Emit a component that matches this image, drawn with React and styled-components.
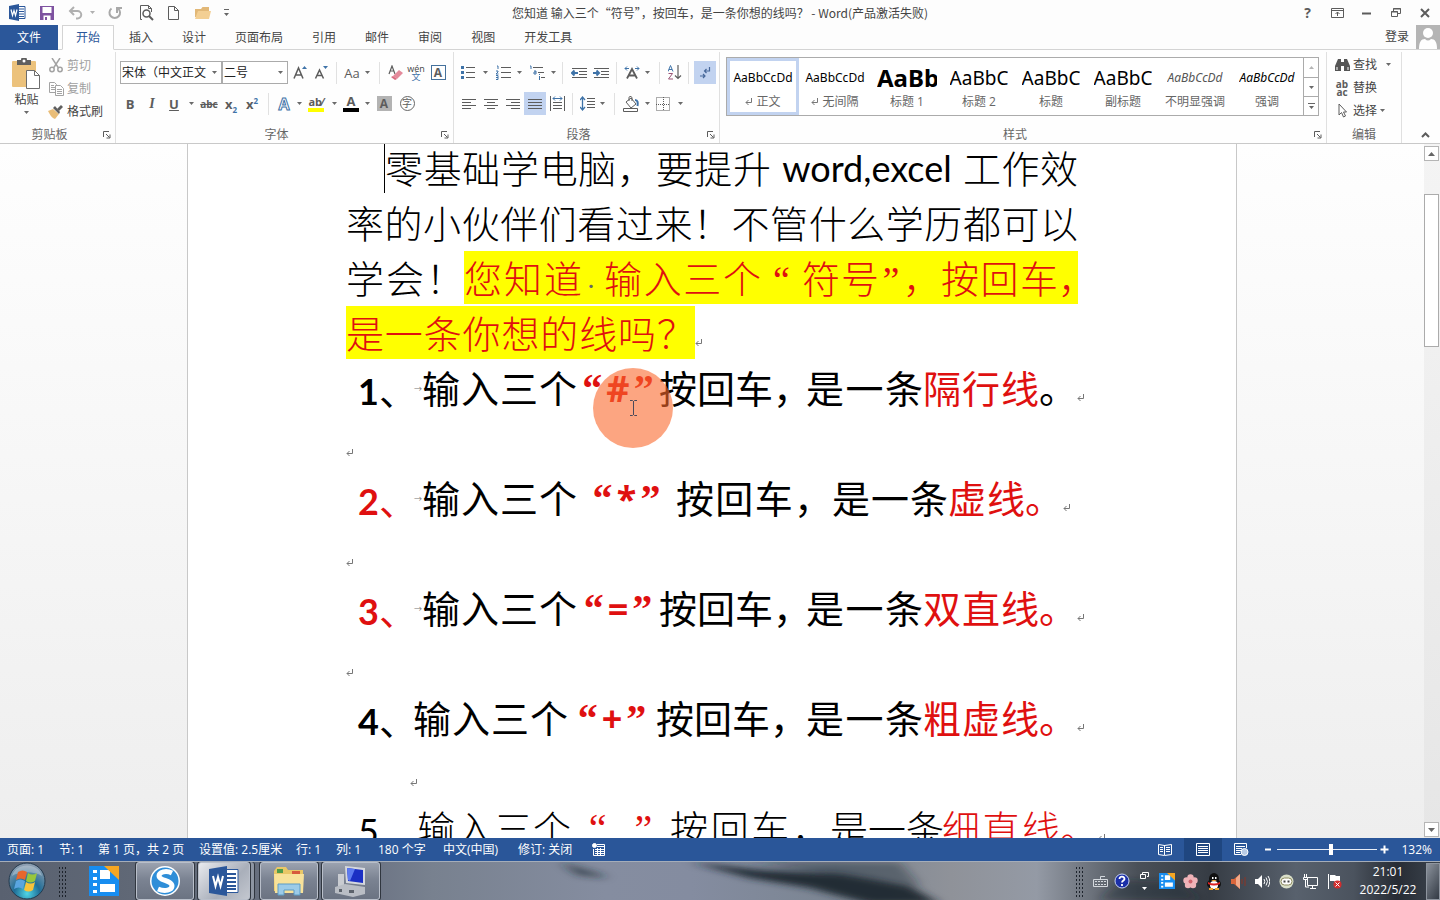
import { useState } from 'react'
import styled, { createGlobalStyle, css } from 'styled-components'

const INK = '#5c5c5c'
const BLUE = '#3f73a8'
const PALE = '#c2d3f0'

/* ---------- icons ---------- */

const Svg = ({ w = 16, h = 16, children, ...rest }) => (
  <svg
    width={w}
    height={h}
    viewBox={`0 0 ${w} ${h}`}
    fill="none"
    stroke={INK}
    aria-hidden="true"
    {...rest}
  >
    {children}
  </svg>
)

const Caret = ({ color = '#6a6a6a' }) => (
  <Svg w={5} h={3} stroke="none">
    <path d="M0 0h5L2.500 3z" fill={color} />
  </Svg>
)

const WordLogo = () => (
  <Svg w={17} h={17} stroke="none">
    <path d="M9 2.500h7v12H9z" fill="#fff" stroke="#2b579a" />
    <path d="M10 5h5M10 7.500h5M10 10h5M10 12.500h5" stroke="#2b579a" />
    <path d="M0 2l10-2v17L0 15z" fill="#2b579a" />
    <path d="M2 5.500l1.500 6L5 6.500l1.500 5L8 5.500" stroke="#fff" strokeWidth="1.200" />
  </Svg>
)

const SaveIcon = () => (
  <Svg w={14} h={14} stroke="none">
    <path d="M0 0h14v14H0z" fill="#7e52a0" />
    <path d="M2.500 1h9v6h-9zM3.500 9.500h7V14h-7z" fill="#fff" />
    <path d="M5 11h2v3H5z" fill="#7e52a0" />
  </Svg>
)

const UndoIcon = () => (
  <Svg w={15} h={14} stroke="#b0b0b0" strokeWidth="2">
    <path d="M2 5h7.500a3.500 3.500 0 010 7.500H8M6 1L2 5l4 4" />
  </Svg>
)

const RedoIcon = () => (
  <Svg w={14} h={14} stroke="#a9a9a9" strokeWidth="2">
    <path d="M3.500 2.500A5.300 5.300 0 1010 2.500M9 7V2H14" />
  </Svg>
)

const PreviewIcon = () => (
  <Svg w={15} h={17}>
    <path d="M3 15.500H1.500v-14h8l3 3V8M9.500 1.500v3h3" />
    <circle cx="7.500" cy="9.500" r="3.500" strokeWidth="1.500" />
    <path d="M10 12l4 4" strokeWidth="2" />
  </Svg>
)

const NewIcon = () => (
  <Svg w={11} h={14}>
    <path d="M.5.5h6l4 4v9H.5zM6.500.5v4h4" />
  </Svg>
)

const FolderIcon = () => (
  <Svg w={16} h={13} stroke="none">
    <path d="M0 3h6l1.500-2H14v10H0z" fill="#e2b877" />
    <path d="M3 5h13l-2 8H0z" fill="#f3cf93" />
  </Svg>
)

const PasteIcon = () => (
  <Svg w={29} h={31} stroke="none">
    <rect x="0" y="3" width="24" height="26" rx="1" fill="#ecc27c" />
    <path d="M5 2h4a3 3 0 016 0h4v5H5z" fill="#5f5f5f" />
    <circle cx="12" cy="3" r="1.500" fill="#fff" />
    <path d="M14.500 12.500h8l5 5v13h-13z" fill="#fff" stroke="#6d6d6d" />
    <path d="M22.500 12.500v5h5" stroke="#6d6d6d" />
  </Svg>
)

const CutIcon = () => (
  <Svg w={14} h={15} stroke="#a3a3a3" strokeWidth="1.500">
    <path d="M3 0l6.500 10M11 0L4.500 10" />
    <circle cx="3" cy="11.500" r="2.200" />
    <circle cx="11" cy="11.500" r="2.200" />
  </Svg>
)

const CopyIcon = () => (
  <Svg w={15} h={14} stroke="#a3a3a3">
    <path d="M.5.5h5l2 2v8h-7zM2 3.500h3M2 5.500h4M2 7.500h4" />
    <path d="M6.500 3.500h5l3 3v7h-8z" fill="#fff" />
    <path d="M8 7.500h5M8 9.500h5M8 11.500h5" />
  </Svg>
)

const BrushIcon = () => (
  <Svg w={16} h={14} stroke="none">
    <path d="M0 6l5-2 6 5-4 5C4 13 2 10 0 6z" fill="#e9bd78" />
    <path d="M5 3l2-2 5 6-1 2z" fill="#5f5f5f" />
    <path d="M9 4l4-4 2 2-4 4z" fill="#5f5f5f" />
  </Svg>
)

const Launcher = () => (
  <Svg w={8} h={8}>
    <path d="M.5 6V.5H6M3 3l3.500 3.500M7 3.500V7H3.500" />
  </Svg>
)

const GrowFont = ({ down }) => (
  <Svg w={14} h={15} stroke="none">
    <path
      d={down ? 'M1.500 13.500L5.500 5l4 8.500M3 10.500h5' : 'M1 13.500L5.500 3l4.500 10.500M2.500 10h6'}
      stroke={INK}
      strokeWidth="1.500"
    />
    <path d={down ? 'M9 1h5l-2.500 3z' : 'M9 4h5l-2.500-3z'} fill={BLUE} />
  </Svg>
)

const EraserIcon = () => (
  <Svg w={15} h={15} stroke="none">
    <path d="M1 9L4 1l3 8M2 6h4" stroke={INK} strokeWidth="1.200" />
    <path d="M5 11l6-6 4 3-6 6z" fill="#e48a9b" />
    <path d="M3 12l2-1 4 3-2 1z" fill="#d9697f" />
  </Svg>
)

const ListIcon = ({ kind }) => (
  <Svg w={15} h={15}>
    {kind === 'bullet' && (
      <>
        <path d="M5 2.500h9M5 7.500h9M5 12.500h9" />
        <path d="M0 2.500h3M0 7.500h3M0 12.500h3" stroke={BLUE} strokeWidth="3" />
      </>
    )}
    {kind === 'number' && (
      <>
        <path d="M5 2.500h10M5 7.500h10M5 12.500h10" />
        <path d="M1 1h1v3M0 6h2v1L0 9h2.500M0 10.500h2v4H0M0 12.500h2" stroke={BLUE} />
      </>
    )}
    {kind === 'multi' && (
      <>
        <path d="M3 2.500h10M8 7.500h6M11 12.500h4" />
        <path d="M0 1h1v3M4 6h2v3H4v-2h2M9.500 11v4M9.500 9v1" stroke={BLUE} />
      </>
    )}
  </Svg>
)

const IndentIcon = ({ out }) => (
  <Svg w={16} h={12}>
    <path d="M1 1.500h15M8 4.500h8M8 7.500h8M1 10.500h15" />
    <path d={out ? 'M7 6H1M3.500 3.500L1 6l2.500 2.500' : 'M0 6h6M3.500 3.500L6 6 3.500 8.500'} stroke={BLUE} strokeWidth="2" />
  </Svg>
)

const AlignIcon = ({ kind }) => {
  const short = { left: 'M0 4.500h9M0 10.500h9', center: 'M3 4.500h8M3 10.500h8', right: 'M5 4.500h9M5 10.500h9', full: 'M0 4.500h14M0 10.500h14' }
  return (
    <Svg w={14} h={12}>
      <path d={`M0 1.500h14M0 7.500h14${short[kind]}`} />
    </Svg>
  )
}

const DistributeIcon = () => (
  <Svg w={15} h={15}>
    <path d="M.5 0v15M14.500 0v15M3 6.500h9M3 9.500h9M3 12.500h9" />
    <path d="M3 2.500h9M5 .5l-2 2 2 2M10 .5l2 2-2 2" stroke={BLUE} />
  </Svg>
)

const ScaleIcon = () => (
  <Svg w={16} h={13}>
    <path d="M3 12.500L8 3l5 9.500M5 9.500h6" strokeWidth="1.800" />
    <path d="M1 2.500h4M3 .5l-2 2 2 2M11 2.500h4M13 .5l2 2-2 2" stroke={BLUE} />
  </Svg>
)

const SortIcon = () => (
  <Svg w={14} h={15}>
    <path d="M0 6.500L2.500.5 5 6.500M1 4.500h3" stroke={BLUE} />
    <path d="M.5 8.500h4L.5 14h4.500" stroke="#9a5577" />
    <path d="M10 0v13M7 10.500l3 3 3-3" strokeWidth="1.200" />
  </Svg>
)

const MarksIcon = () => (
  <Svg w={11} h={12} stroke="#47689a">
    <path d="M9.500 0v4h-5M6.500 2l-2 2 2 2M0 9h5M3 7l2 2-2 2" strokeWidth="1.200" />
  </Svg>
)

const SpacingIcon = () => (
  <Svg w={15} h={15}>
    <path d="M7 2.500h8M7 5.500h8M7 8.500h8M7 11.500h8" />
    <path d="M2.500 1v12M0 4l2.500-3L5 4M0 11l2.500 3L5 11" stroke={BLUE} strokeWidth="1.300" />
  </Svg>
)

const FillIcon = () => (
  <Svg w={16} h={16}>
    <path d="M3 6l5-4 5 6-5 4zM6 5V1.500C6 0 9 0 9 2v3" />
    <path d="M12 4c3 0 3 3 2.500 6" stroke={BLUE} strokeWidth="2" />
    <path d="M.5 12.500h14v3H.5z" fill="#fff" />
  </Svg>
)

const BorderIcon = () => (
  <Svg w={14} h={14} strokeDasharray="1 1">
    <path d="M.5.5h13v13H.5zM7.500 0v14M0 7.500h14" />
  </Svg>
)

const FindIcon = () => (
  <Svg w={15} h={13} stroke="none">
    <path d="M3 1h3v3h3V1h3l3 7v5H9V8H6v5H0V8z" fill="#555" />
    <path d="M2 9v3M13 9v3" stroke="#fff" />
  </Svg>
)

const PointerIcon = () => (
  <Svg w={9} h={15}>
    <path d="M1 1v11l2.500-2.500L5.500 14l2-1-2-4H8.500z" fill="#fff" />
  </Svg>
)

const ReturnMark = () => (
  <Svg w={8} h={8} stroke="#777">
    <path d="M6.500 0v4.500H1M3.500 2L1 4.500 3.500 7" />
  </Svg>
)

const UserIcon = () => (
  <Svg w={24} h={24} stroke="none">
    <path d="M0 0h24v24H0z" fill="#b5b5b5" />
    <circle cx="12" cy="8" r="5" fill="#fff" />
    <path d="M3 24c0-7 2-10 6-10 2 2 4 2 6 0 4 0 6 3 6 10z" fill="#fff" />
  </Svg>
)

/* ---------- window frame ---------- */

const GlobalStyle = createGlobalStyle`
  * { box-sizing: border-box; }
  body {
    margin: 0;
    overflow: hidden;
    font: 12px/16px 'Open Sans', 'Noto Sans CJK SC', sans-serif;
    color: #444;
  }
  button, select, input { font: inherit; color: inherit; }
  svg { flex: none; display: block; }
`

const Window = styled.div`
  display: flex;
  flex-direction: column;
  height: 100vh;
  background: #fff;
`

const PlainButton = styled.button`
  display: flex;
  align-items: center;
  justify-content: center;
  flex: none;
  padding: 0;
  border: 0;
  background: none;
  white-space: nowrap;
`

const TitleBar = styled.header`
  display: grid;
  grid-template-columns: 1fr auto 1fr;
  align-items: center;
  height: 25px;
  background: #fdfdfd;
`

const TitleText = styled.span`
  font-family: 'Noto Sans CJK SC', sans-serif;
`

const TitleSide = styled.div`
  display: flex;
  padding: 0 1px;
  justify-content: ${(p) => (p.$end ? 'flex-end' : 'flex-start')};
`

const Tool = styled(PlainButton)`
  width: ${(p) => p.$w || 22}px;
  height: ${(p) => p.$h || 23}px;
  ${(p) =>
    p.$on &&
    css`
      background: ${PALE};
    `}
`

const TabBar = styled.nav`
  display: flex;
  gap: 1px;
  height: 25px;
  background: #fdfdfd;
  border-bottom: 1px solid #d4d4d4;
`

const Tab = styled(PlainButton)`
  height: 25px;
  padding: 0 14px;
  ${(p) =>
    p.$file &&
    css`
      padding: 0 17px;
      margin-right: 3px;
      background: #2b579a;
      color: #fff;
    `}
  ${(p) =>
    p.$active &&
    css`
      padding: 0 13px;
      border: 1px solid #d4d4d4;
      border-bottom-color: #fff;
      background: #fff;
      color: #2b579a;
    `}
`

const SignIn = styled(PlainButton)`
  gap: 7px;
  margin-left: auto;
`

/* ---------- ribbon ---------- */

const Ribbon = styled.section`
  display: flex;
  flex: none;
  height: 94px;
  padding-top: 2px;
  background: #fefefe;
  border-bottom: 1px solid #c9c9c9;
`

const Group = styled.div`
  display: flex;
  flex-direction: column;
  flex: ${(p) => (p.$w ? `0 0 ${p.$w}px` : '1')};
  min-width: 0;
  border-right: 1px solid #e0e0e0;
`

const GroupBody = styled.div`
  flex: 1;
  min-height: 0;
  padding: ${(p) => p.$pad || '0'};
`

const GroupLabel = styled.div`
  display: grid;
  grid-template-columns: ${(p) => (p.$plain ? '1fr' : '1fr 16px')};
  align-items: center;
  justify-items: center;
  height: 16px;
  color: #666;
`

const ToolRow = styled.div`
  display: flex;
  align-items: center;
  height: 23px;
  margin-bottom: 8px;
`

const Sep = styled.span`
  flex: none;
  width: ${(p) => p.$w}px;
  height: 22px;
  background: linear-gradient(#e1e1e1, #e1e1e1) center / 1px 100% no-repeat;
`

const Combo = styled.label`
  position: relative;
  flex: none;
  width: ${(p) => p.$w}px;
  height: 23px;
  select {
    width: 100%;
    height: 100%;
    padding: 0 0 0 1px;
    border: 1px solid #ababab;
    border-radius: 0;
    appearance: none;
    background: #fff;
    color: #222;
  }
  svg {
    position: absolute;
    right: 5px;
    top: 10px;
  }
`

const Glyph = styled.span`
  font: ${(p) => p.$font || "bold 14px/18px 'Open Sans'"}, 'Noto Sans CJK SC', sans-serif;
  color: ${(p) => p.$color || INK};
  text-decoration: ${(p) => p.$deco || 'none'};
  sub,
  sup {
    font-size: 8px;
    line-height: 0;
    color: ${BLUE};
  }
`

const Outlined = styled(Glyph)`
  color: #fff;
  -webkit-text-stroke: 1px ${BLUE};
`

const Underbar = styled.span`
  display: flex;
  flex-direction: column;
  align-items: center;
  width: 16px;
  border-bottom: 4px solid ${(p) => p.$bar};
`

const Boxed = styled.span`
  display: grid;
  place-items: center;
  width: 15px;
  height: 15px;
  font: bold 12px/13px 'Open Sans', 'Noto Sans CJK SC', sans-serif;
  color: ${INK};
  ${(p) => p.$kind === 'border' && `border: 1px solid #44719c;`}
  ${(p) => p.$kind === 'shade' && `background: #b3b3b3;`}
  ${(p) =>
    p.$kind === 'round' &&
    `border: 1px solid #666; border-radius: 50%; font-weight: normal; font-size: 10px;`}
`

const Phonetic = styled.span`
  display: flex;
  flex-direction: column;
  align-items: center;
  font-size: 9px;
  line-height: 8px;
  b {
    font-weight: normal;
    color: ${BLUE};
  }
`

const ClipBody = styled.div`
  display: flex;
  gap: 7px;
  padding: 2px 0 0 12px;
`

const PasteButton = styled(PlainButton)`
  flex-direction: column;
  justify-content: flex-start;
  gap: 3px;
  padding-top: 4px;
  width: 29px;
`

const CommandList = styled.div`
  display: flex;
  flex-direction: column;
  align-items: flex-start;
`

const Command = styled(PlainButton)`
  gap: 3px;
  height: 23px;
  color: ${(p) => (p.$off ? '#a0a0a0' : '#444')};
`

const IconCell = styled.span`
  display: flex;
  justify-content: center;
  width: 16px;
`

const Gallery = styled.div`
  display: flex;
  height: 59px;
  border: 1px solid #ababab;
  background: #fff;
`

const StyleCell = styled(PlainButton)`
  flex: 1 1 72px;
  min-width: 0;
  flex-direction: column;
  border: 3px solid ${(p) => (p.$on ? PALE : 'transparent')};
  color: #666;
`

const Sample = styled.span`
  height: 30px;
  max-width: 60px;
  overflow: hidden;
  color: ${(p) => p.$color || '#000'};
  font: ${(p) => p.$font || '12px'}/30px 'Noto Sans', sans-serif;
`

const StyleName = styled.span`
  display: flex;
  align-items: center;
  gap: 3px;
  height: 18px;
`

const GalleryScroll = styled.div`
  display: grid;
  grid-template-rows: 1fr 1fr 1fr;
  flex: 0 0 15px;
  border-left: 1px solid #ababab;
  button + button {
    border-top: 1px solid #ababab;
  }
`

const RibbonEnd = styled.div`
  display: flex;
  align-items: flex-end;
  justify-content: flex-end;
  flex: 0 0 38px;
  padding: 0 10px 5px 0;
`

/* ---------- document ---------- */

const Workspace = styled.main`
  display: flex;
  flex: 1;
  min-height: 0;
`

const Canvas = styled.div`
  flex: 1;
  overflow: hidden;
  background: linear-gradient(#fefefe, #f7f7f7 45%, #eeeeee);
`

/* scrolled a little into its first line */
const Page = styled.article`
  position: relative;
  width: 1050px;
  min-height: 1400px;
  margin: -3px auto 0;
  padding: 0 158px;
  border: solid #c8c8c8;
  border-width: 0 1px;
  background: #fff;
`

const Line = styled.p`
  display: flex;
  height: 55px;
  margin: 0;
  padding-left: ${(p) => p.$indent || 0}px;
  font: 38px/55px 'Noto Sans CJK SC', sans-serif;
  font-weight: ${(p) => (p.$strong ? 400 : 300)};
  color: #000;
  white-space: nowrap;
`

const Run = styled.span`
  flex: none;
  width: ${(p) => p.$w}px;
  height: 53px;
  line-height: 51px;
  text-align-last: ${(p) => (p.$center ? 'center' : 'justify')};
  color: ${(p) => (p.$red ? '#df1010' : 'inherit')};
  ${(p) => p.$mark && `background: #ff0;`}
  ${(p) => p.$latin && `font-family: Lato, 'Noto Sans CJK SC', sans-serif; font-size: 36px; line-height: 55px; font-weight: 400;`}
`

const Quote = styled.q`
  quotes: none;
  font-family: 'Liberation Serif', serif;
  font-weight: ${(p) => (p.$strong ? 'bold' : 'normal')};
`

const Quoted = styled.span`
  display: flex;
  flex: none;
  justify-content: center;
  gap: 4px;
  width: ${(p) => p.$w}px;
  height: 53px;
  font-family: 'Noto Sans', sans-serif;
  font-weight: ${(p) => (p.$thin ? 'normal' : 'bold')};
  font-size: 36px;
  color: #df1010;
  q {
    font-size: 40px;
  }
`

const Symbol = styled.span`
  min-width: 20px;
  text-align: center;
`

const SpaceDot = styled.small`
  font-size: 18px;
  color: #666;
`

const Number = styled.span`
  flex: none;
  width: ${(p) => p.$w}px;
  font-size: 38px;
  color: ${(p) => (p.$red ? '#df1010' : '#000')};
  b {
    font-family: Lato, sans-serif;
    font-size: 36px;
    font-weight: ${(p) => (p.$thin ? 'normal' : 'bold')};
  }
`

const TabMark = styled.span`
  flex: none;
  width: 8px;
  font-size: 8px;
  color: #777;
`

const EndMark = styled.span`
  align-self: center;
  padding-top: 18px;
`

const Caretline = styled.span`
  flex: none;
  width: 1px;
  height: 52px;
  margin-left: 38px;
  background: #000;
`

const Spotlight = styled.div`
  position: absolute;
  left: 405px;
  top: 227px;
  display: grid;
  place-items: center;
  width: 80px;
  height: 80px;
  border-radius: 50%;
  background: rgba(250, 105, 45, 0.6);
`

const VScroll = styled.div`
  display: flex;
  flex-direction: column;
  justify-content: space-between;
  flex: 0 0 16px;
  padding: 2px 1px 1px 0;
  background: linear-gradient(#f4f4f4, #e6e6e6);
  button {
    height: 15px;
    border: 1px solid #b5b5b5;
    background: #fff;
  }
`

const Track = styled.div`
  flex: 1;
  padding-top: 33px;
  &::before {
    content: '';
    display: block;
    height: 151px;
    border: 1px solid #ababab;
    background: #fff;
  }
`

/* ---------- status bar ---------- */

const StatusBar = styled.footer`
  display: flex;
  align-items: center;
  flex: none;
  height: 23px;
  padding-left: 7px;
  background: #2a5699;
  color: #fff;
  white-space: nowrap;
`

const Status = styled.span`
  flex: 0 0 ${(p) => p.$w}px;
`

const ViewTools = styled.div`
  display: flex;
  align-items: center;
  margin-left: auto;
  padding-right: 8px;
`

const ViewButton = styled(PlainButton)`
  width: 38px;
  height: 23px;
  background: ${(p) => (p.$on ? '#1f4680' : 'none')};
`

const ZoomSlider = styled.input`
  width: 100px;
  height: 13px;
  margin: 0 3px;
  appearance: none;
  background: linear-gradient(#e8eef7, #e8eef7) center / 100% 1px no-repeat;
  &::-webkit-slider-thumb {
    appearance: none;
    width: 4px;
    height: 11px;
    background: #fff;
  }
`

const ZoomValue = styled.span`
  margin-left: 12px;
`

/* ---------- taskbar ---------- */

const Taskbar = styled.footer`
  position: relative;
  display: flex;
  align-items: center;
  flex: none;
  height: 39px;
  overflow: hidden;
  border-top: 1px solid #a5adb9;
  background: linear-gradient(
    90deg,
    #596170 0,
    #5f6775 8%,
    #6d7585 26%,
    #78818f 30%,
    #858da0 42%,
    #848ca0 48%,
    #7b8592 58%,
    #8f9299 66%,
    #949aa5 72%,
    #4a5058 79%,
    #363c44 84%,
    #58616d 90%,
    #4b535e 94%,
    #272c34 97%,
    #3c444e 100%
  );
`

const Backdrop = styled.svg`
  position: absolute;
  inset: 0;
  width: 100%;
  height: 100%;
`

const TaskItems = styled.div`
  position: relative;
  display: flex;
  align-items: center;
  height: 100%;
  padding-left: 8px;
`

const Grip = styled.span`
  width: 8px;
  height: 31px;
  margin: 0 ${(p) => p.$gap || 0}px;
  background: radial-gradient(circle, #1d232c 1px, transparent 1px) 0 0 / 3px 4px;
`

const TaskButton = styled(PlainButton)`
  width: ${(p) => p.$w || 58}px;
  height: 38px;
  margin-right: ${(p) => p.$gap || 4}px;
  border: 1px solid #b9bfca;
  border-radius: 3px;
  background: linear-gradient(#9ba2af, #7b8392 45%, #6b7382);
  box-shadow: 0 0 0 1px #30363f;
  ${(p) =>
    p.$on &&
    css`
      background: linear-gradient(135deg, #e8eaee, #a9afba 60%, #c3c7cf);
      box-shadow: 0 0 0 1px #30363f, 4px 0 0 0 #8d95a2, 5px 0 0 0 #30363f;
    `}
`

const BareTaskButton = styled(PlainButton)`
  width: 52px;
  margin-right: 6px;
`

const Tray = styled.div`
  position: relative;
  display: flex;
  align-items: center;
  height: 100%;
  margin-left: auto;
`

const Clock = styled.time`
  width: 76px;
  margin-left: 4px;
  text-align: center;
  line-height: 18px;
  color: #fff;
`

const ShowDesktop = styled(PlainButton)`
  width: 14px;
  height: 37px;
  border: 1px solid #8e959f;
  background: linear-gradient(120deg, #8b929c, #333a44);
`

/* ---------- data ---------- */

const TABS = ['插入', '设计', '页面布局', '引用', '邮件', '审阅', '视图', '开发工具']

const STYLES = [
  { name: '正文', sample: 'AaBbCcDd', mark: true },
  { name: '无间隔', sample: 'AaBbCcDd', mark: true },
  { name: '标题 1', sample: 'AaBb', font: 'bold 24px' },
  { name: '标题 2', sample: 'AaBbC', font: '19px' },
  { name: '标题', sample: 'AaBbC', font: '19px' },
  { name: '副标题', sample: 'AaBbC', font: '19px' },
  { name: '不明显强调', sample: 'AaBbCcDd', font: 'italic 12px', color: '#555' },
  { name: '强调', sample: 'AaBbCcDd', font: 'italic 12px' },
]

// w: widths of number, text, quoted symbol, 按回车, 是一条, and the name of the line
const ITEMS = [
  { n: 1, symbol: '#', name: '隔行线', tab: true, w: [56, 155, 82, 147, 117, 116] },
  { n: 2, symbol: '*', name: '虚线', tab: true, red: true, w: [56, 155, 99, 156, 116, 77] },
  { n: 3, symbol: '=', name: '双直线', tab: true, red: true, w: [56, 155, 82, 147, 117, 116] },
  { n: 4, symbol: '+', name: '粗虚线', last: true, w: [55, 155, 88, 150, 117, 116] },
  { n: 5, symbol: '\u2002', name: '细直线', thin: true, w: [59, 154, 99, 160, 112, 118] },
]

const STATUS = [
  ['页面: 1', 52],
  ['节: 1', 39],
  ['第 1 页，共 2 页', 101],
  ['设置值: 2.5厘米', 97],
  ['行: 1', 40],
  ['列: 1', 42],
  ['180 个字', 65],
  ['中文(中国)', 75],
  ['修订: 关闭', 74],
]

/* ---------- parts ---------- */

const Drop = ({ w, label = '更多' }) => (
  <Tool $w={w} aria-label={label}>
    <Caret />
  </Tool>
)

const Header = () => (
  <>
    <TitleBar>
      <TitleSide>
        <Tool $w={32} aria-label="Word"><WordLogo /></Tool>
        <Tool $w={28} aria-label="保存"><SaveIcon /></Tool>
        <Tool $w={28} aria-label="撤消"><UndoIcon /></Tool>
        <Tool $w={6} aria-label="撤消列表"><Caret color="#b0b0b0" /></Tool>
        <Tool $w={40} aria-label="重复"><RedoIcon /></Tool>
        <Tool $w={22} aria-label="打印预览"><PreviewIcon /></Tool>
        <Tool $w={32} aria-label="新建"><NewIcon /></Tool>
        <Tool $w={28} aria-label="打开"><FolderIcon /></Tool>
        <Tool $w={18} aria-label="自定义">
          <Svg w={5} h={7} stroke="none">
            <path d="M0 0h5v1H0zM0 4h5L2.500 7z" fill="#666" />
          </Svg>
        </Tool>
      </TitleSide>
      <TitleText>您知道 输入三个“符号”，按回车，是一条你想的线吗？ - Word(产品激活失败)</TitleText>
      <TitleSide $end>
        <Tool $w={29} aria-label="帮助"><Glyph>?</Glyph></Tool>
        <Tool $w={30} aria-label="功能区显示选项">
          <Svg w={13} h={10}>
            <path d="M.5.5h12v9H.5zM0 2.500h13M6.500 8V4M4.500 6l2-2 2 2" />
          </Svg>
        </Tool>
        <Tool $w={29} aria-label="最小化">
          <Svg w={9} h={4}><path d="M0 2.500h9" strokeWidth="2" /></Svg>
        </Tool>
        <Tool $w={30} aria-label="还原">
          <Svg w={10} h={9}><path d="M2.500 3V.5h7v5H7M.5 3.500h6v5h-6zM0 4h7M2 1h8" /></Svg>
        </Tool>
        <Tool $w={28} aria-label="关闭">
          <Svg w={10} h={10}><path d="M1 1l8 8M9 1L1 9" strokeWidth="2" /></Svg>
        </Tool>
      </TitleSide>
    </TitleBar>
    <TabBar>
      <Tab $file>文件</Tab>
      <Tab $active>开始</Tab>
      {TABS.map((tab) => (
        <Tab key={tab}>{tab}</Tab>
      ))}
      <SignIn>
        登录
        <UserIcon />
      </SignIn>
    </TabBar>
  </>
)

const Label = ({ children, plain }) => (
  <GroupLabel $plain={plain}>
    <span>{children}</span>
    {!plain && (
      <PlainButton aria-label={`${children}设置`}>
        <Launcher />
      </PlainButton>
    )}
  </GroupLabel>
)

const Clipboard = () => (
  <Group $w={116}>
    <GroupBody>
      <ClipBody>
        <PasteButton>
          <PasteIcon />
          <span>粘贴</span>
          <Caret />
        </PasteButton>
        <CommandList>
          <Command $off><IconCell><CutIcon /></IconCell>剪切</Command>
          <Command $off><IconCell><CopyIcon /></IconCell>复制</Command>
          <Command><IconCell><BrushIcon /></IconCell>格式刷</Command>
        </CommandList>
      </ClipBody>
    </GroupBody>
    <Label>剪贴板</Label>
  </Group>
)

const FontGroup = () => (
  <Group $w={338}>
    <GroupBody $pad="9px 0 0 4px">
      <ToolRow>
        <Combo $w={102}>
          <select aria-label="字体"><option>宋体（中文正文</option></select>
          <Caret />
        </Combo>
        <Combo $w={66}>
          <select aria-label="字号"><option>二号</option></select>
          <Caret />
        </Combo>
        <Tool $w={24} aria-label="增大字号"><GrowFont /></Tool>
        <Tool $w={18} aria-label="减小字号"><GrowFont down /></Tool>
        <Sep $w={12} />
        <Tool $w={20}><Glyph $font="13px/18px 'Open Sans'">Aa</Glyph></Tool>
        <Drop w={10} />
        <Sep $w={14} />
        <Tool $w={18} aria-label="清除格式"><EraserIcon /></Tool>
        <Tool $w={24}><Phonetic>wén<b>文</b></Phonetic></Tool>
        <Tool $w={20}><Boxed $kind="border">A</Boxed></Tool>
      </ToolRow>
      <ToolRow>
        <Tool $w={20}><Glyph $font="bold 13px/18px 'Open Sans'">B</Glyph></Tool>
        <Tool $w={24}><Glyph $font="italic bold 14px/18px 'Liberation Serif'">I</Glyph></Tool>
        <Tool $w={20}><Glyph $font="bold 13px/18px 'Open Sans'" $deco="underline">U</Glyph></Tool>
        <Drop w={14} />
        <Tool $w={22}><Glyph $font="bold 10px/18px 'Open Sans'" $deco="line-through">abc</Glyph></Tool>
        <Tool $w={22}><Glyph $font="bold 13px/18px 'Open Sans'">x<sub>2</sub></Glyph></Tool>
        <Tool $w={20}><Glyph $font="bold 13px/18px 'Open Sans'">x<sup>2</sup></Glyph></Tool>
        <Sep $w={12} />
        <Tool $w={20}><Outlined $font="bold 16px/18px 'Open Sans'">A</Outlined></Tool>
        <Drop w={10} />
        <Tool $w={24}>
          <Underbar $bar="#ff0"><Glyph $font="bold 11px/13px 'Open Sans'">ab⁄</Glyph></Underbar>
        </Tool>
        <Drop w={12} />
        <Tool $w={22}>
          <Underbar $bar="#000"><Glyph $font="bold 13px/13px 'Open Sans'">A</Glyph></Underbar>
        </Tool>
        <Drop w={10} />
        <Tool $w={24}><Boxed $kind="shade">A</Boxed></Tool>
        <Tool $w={22}><Boxed $kind="round">字</Boxed></Tool>
      </ToolRow>
    </GroupBody>
    <Label>字体</Label>
  </Group>
)

const ParagraphGroup = () => {
  const [align, setAlign] = useState('full')
  return (
    <Group $w={266}>
      <GroupBody $pad="9px 0 0 4px">
        <ToolRow>
          <Tool $w={20} aria-label="项目符号"><ListIcon kind="bullet" /></Tool>
          <Drop w={14} />
          <Tool $w={22} aria-label="编号"><ListIcon kind="number" /></Tool>
          <Drop w={10} />
          <Tool $w={26} aria-label="多级列表"><ListIcon kind="multi" /></Tool>
          <Drop w={6} />
          <Sep $w={12} />
          <Tool aria-label="减少缩进量"><IndentIcon out /></Tool>
          <Tool aria-label="增加缩进量"><IndentIcon /></Tool>
          <Sep $w={8} />
          <Tool $w={24} aria-label="中文版式"><ScaleIcon /></Tool>
          <Drop w={6} />
          <Sep $w={18} />
          <Tool $w={14} aria-label="排序"><SortIcon /></Tool>
          <Sep $w={12} />
          <Tool $on aria-label="显示编辑标记"><MarksIcon /></Tool>
        </ToolRow>
        <ToolRow>
          {['left', 'center', 'right', 'full'].map((kind) => (
            <Tool key={kind} $on={align === kind} onClick={() => setAlign(kind)} aria-label={kind}>
              <AlignIcon kind={kind} />
            </Tool>
          ))}
          <Tool aria-label="分散对齐"><DistributeIcon /></Tool>
          <Sep $w={8} />
          <Tool aria-label="行距"><SpacingIcon /></Tool>
          <Drop w={8} />
          <Sep $w={16} />
          <Tool $w={18} aria-label="底纹"><FillIcon /></Tool>
          <Drop w={14} />
          <Tool $w={18} aria-label="边框"><BorderIcon /></Tool>
          <Drop w={16} />
        </ToolRow>
      </GroupBody>
      <Label>段落</Label>
    </Group>
  )
}

const StylesGroup = () => (
  <Group>
    <GroupBody $pad="5px 7px 0 6px">
      <Gallery>
        {STYLES.map((s, i) => (
          <StyleCell key={s.name} $on={i === 0}>
            <Sample $font={s.font} $color={s.color}>{s.sample}</Sample>
            <StyleName>
              {s.mark && <ReturnMark />}
              {s.name}
            </StyleName>
          </StyleCell>
        ))}
        <GalleryScroll>
          <PlainButton aria-label="上一行">
            <Svg w={5} h={3} stroke="none"><path d="M0 3h5L2.500 0z" fill="#b5b5b5" /></Svg>
          </PlainButton>
          <PlainButton aria-label="下一行"><Caret /></PlainButton>
          <PlainButton aria-label="其他">
            <Svg w={7} h={6} stroke="none"><path d="M0 0h7v1H0zM1 3h5L3.500 6z" fill="#666" /></Svg>
          </PlainButton>
        </GalleryScroll>
      </Gallery>
    </GroupBody>
    <Label>样式</Label>
  </Group>
)

const EditGroup = () => (
  <Group $w={75}>
    <GroupBody $pad="1px 0 0 7px">
      <CommandList>
        <Command><IconCell><FindIcon /></IconCell>查找 <Drop w={16} /></Command>
        <Command>
          <IconCell>
            <Glyph $font="bold 10px/8px 'Open Sans'">ab<br />ac</Glyph>
          </IconCell>
          替换
        </Command>
        <Command><IconCell><PointerIcon /></IconCell>选择<Caret /></Command>
      </CommandList>
    </GroupBody>
    <Label plain>编辑</Label>
  </Group>
)

const ListItem = ({ n, symbol, name, tab, red, thin, last, w }) => {
  const [wNum, wText, wQuote, wPress, wIs, wName] = w
  return (
    <>
      <Line $indent={12} $strong={!thin}>
        <Number $w={wNum} $red={red} $thin={thin}><b>{n}</b>、</Number>
        {tab && <TabMark>→</TabMark>}
        <Run $w={wText}>输入三个</Run>
        <Quoted $w={wQuote} $thin={thin}>
          <Quote $strong={!thin}>“</Quote>
          <Symbol>{symbol}</Symbol>
          <Quote $strong={!thin}>”</Quote>
        </Quoted>
        <Run $w={wPress}>按回车，</Run>
        <Run $w={wIs}>是一条</Run>
        <Run $w={wName} $red>{name}</Run>
        <Run $w={38} $red={n !== 1}>。</Run>
        <EndMark><ReturnMark /></EndMark>
      </Line>
      <Line $indent={last ? 64 : 0}>
        <EndMark><ReturnMark /></EndMark>
      </Line>
    </>
  )
}

const Document = () => (
  <Page>
    <Line>
      <Caretline />
      <Run $w={386}>零基础学电脑，要提升</Run>
      <Run $w={192} $center $latin>word,excel</Run>
      <Run $w={115}>工作效</Run>
    </Line>
    <Line>
      <Run $w={732}>率的小伙伴们看过来！不管什么学历都可以</Run>
    </Line>
    <Line>
      <Run $w={118}>学会！</Run>
      <Run $w={118} $mark $red>您知道</Run>
      <Run $w={22} $mark><SpaceDot>·</SpaceDot></Run>
      <Run $w={157} $mark $red>输入三个</Run>
      <Run $w={41} $mark $red $center><Quote>“</Quote></Run>
      <Run $w={77} $mark $red>符号</Run>
      <Run $w={24} $mark $red $center><Quote>”</Quote></Run>
      <Run $w={38} $mark $red>，</Run>
      <Run $w={117} $mark $red>按回车</Run>
      <Run $w={20} $mark $red>，</Run>
    </Line>
    <Line>
      <Run $w={349} $mark $red>是一条你想的线吗？</Run>
      <EndMark><ReturnMark /></EndMark>
    </Line>
    {ITEMS.map((item) => (
      <ListItem key={item.n} {...item} />
    ))}
    <Spotlight>
      <Svg w={9} h={16} stroke="#4a4a5a">
        <path d="M1 .5h2.500l1 1 1-1H8M4.500 1v14M1 15.500h2.500l1-1 1 1H8" />
      </Svg>
    </Spotlight>
  </Page>
)

const Footer = () => {
  const [zoom, setZoom] = useState(54)
  return (
    <StatusBar>
      {STATUS.map(([text, w]) => (
        <Status key={text} $w={w}>{text}</Status>
      ))}
      <Svg w={13} h={13} stroke="#fff">
        <path d="M5 1.500h7.500v11h-11V6M3 6.500h9M3 8.500h9M3 10.500h9M5.500 5v7M8.500 5v7M5 3.500h7" />
        <circle cx="2.500" cy="2.500" r="2" fill="#fff" />
      </Svg>
      <ViewTools>
        <ViewButton aria-label="阅读视图">
          <Svg w={14} h={13} stroke="#fff">
            <path d="M.5 1.500l6 1 7-1v10l-7 1-6-1zM6.500 2v10M2 4.500h3M2 6.500h3M2 8.500h3M8 4.500h4M8 6.500h4M8 8.500h4" />
          </Svg>
        </ViewButton>
        <ViewButton $on aria-label="页面视图">
          <Svg w={14} h={13} stroke="#fff">
            <path d="M.5.5h13v12H.5zM2 3.500h10M2 5.500h10M2 7.500h10M2 9.500h10" />
          </Svg>
        </ViewButton>
        <ViewButton aria-label="Web 版式">
          <Svg w={15} h={13} stroke="#fff">
            <path d="M7 11.500H.5V.5h12V5M2 3.500h9M2 5.500h6M2 7.500h5M2 9.500h4" />
            <circle cx="10.500" cy="9" r="3.500" fill="#b9cce6" />
          </Svg>
        </ViewButton>
        <PlainButton aria-label="缩小">
          <Svg w={14} h={9} stroke="#fff"><path d="M5 4.500h6" strokeWidth="2" /></Svg>
        </PlainButton>
        <ZoomSlider
          type="range"
          aria-label="缩放"
          value={zoom}
          onChange={(e) => setZoom(e.target.valueAsNumber)}
        />
        <PlainButton aria-label="放大">
          <Svg w={9} h={9} stroke="#fff"><path d="M.5 4.500h8M4.500.5v8" strokeWidth="2" /></Svg>
        </PlainButton>
        <ZoomValue>132%</ZoomValue>
      </ViewTools>
    </StatusBar>
  )
}

/* ---------- taskbar drawings ---------- */

const StartOrb = () => (
  <Svg w={38} h={38} stroke="none">
    <defs>
      <radialGradient id="orb" cx="50%" cy="85%" r="80%">
        <stop offset="0" stopColor="#4fd6e6" />
        <stop offset=".45" stopColor="#1f6d97" />
        <stop offset="1" stopColor="#8b9db0" />
      </radialGradient>
    </defs>
    <circle cx="19" cy="19" r="18" fill="url(#orb)" stroke="#243a4e" />
    <path d="M4 14C8 0 30 0 34 14c-8-5-22-5-30 0z" fill="#fff" opacity=".28" />
    <path d="M10 10c3-2 6-2 9 0l-2 8c-3-2-6-2-9 0z" fill="#e8672c" />
    <path d="M20 11c3 2 6 2 9 0l-2 8c-3 2-6 2-9 0z" fill="#98c63c" />
    <path d="M8 19c3-2 6-2 9 0l-2 8c-3-2-6-2-9 0z" fill="#5aa5e0" />
    <path d="M18 20c3 2 6 2 9 0l-2 8c-3 2-6 2-9 0z" fill="#f8c33a" />
  </Svg>
)

const NoteApp = ({ size = 30 }) => (
  <svg width={size} height={size} viewBox="0 0 30 30" aria-hidden="true">
    <path d="M0 0h30v30H0z" fill="#178df0" />
    <path d="M11 4h10v9H11zM11 18h15v8H11zM4 4h4v3H4zM4 11h4v3H4zM4 17h4v3H4zM4 24h4v3H4z" fill="#fff" />
    <path d="M15 0h15v14z" fill="#f5a623" />
  </svg>
)

const Sogou = () => (
  <Svg w={32} h={32} stroke="none">
    <circle cx="16" cy="16" r="15" fill="#fff" />
    <circle cx="16" cy="16" r="13.500" fill="#2f8ed8" />
    <path d="M23 8c-6-3-13-1-13 3 0 5 13 4 13 10 0 4-7 6-14 3" stroke="#fff" strokeWidth="5" />
  </Svg>
)

const WordBig = () => (
  <Svg w={30} h={30} stroke="none">
    <path d="M16 3.500h13v23H16z" fill="#fff" stroke="#2b579a" />
    <path d="M18 8h9M18 12h9M18 16h9M18 20h9M18 23h9" stroke="#2b579a" strokeWidth="2" />
    <path d="M0 3l18-3v30L0 27z" fill="#2b579a" />
    <path d="M4 10l2.500 10L9 11l2.500 9L14 10" stroke="#fff" strokeWidth="2" />
  </Svg>
)

const Explorer = () => (
  <Svg w={32} h={30} stroke="none">
    <path d="M1 5l3-4h9l2 3h15v21H1z" fill="#e9c768" />
    <path d="M4 3h6v4H4z" fill="#4f9c4a" />
    <path d="M19 5h8v3h-8z" fill="#d75a3c" />
    <path d="M1 8h30l-1 19H2z" fill="#f8e29a" />
    <path d="M5 29V18h22v11h-6v-5H11v5z" fill="#9ccbe8" stroke="#5c9cc5" />
  </Svg>
)

const Computer = () => (
  <Svg w={32} h={32} stroke="none">
    <path d="M10 1l20 2v17l-19-2z" fill="#d5d8dd" />
    <path d="M12 3l16 2v13l-15-2z" fill="#1b2fc4" />
    <path d="M12 3l8 1-5 12-2-1z" fill="#5d7bf0" />
    <path d="M3 9h6v12H3z" fill="#c9ccd1" />
    <path d="M0 22l10-3 20 3v7l-12 3L0 28z" fill="#b9bdc4" />
    <path d="M4 24h3v3H4zM14 25h5v3h-5z" fill="#5c626b" />
  </Svg>
)

const TrayIcon = ({ kind }) => {
  switch (kind) {
    case 'keyboard':
      return (
        <Svg w={15} h={12} stroke="#d5d9de">
          <path d="M.5 4.500h14v7H.5zM7.500 4V1.500H12" />
          <path d="M2 6.500h11M2 9.500h11" strokeDasharray="2 1" />
        </Svg>
      )
    case 'help':
      return (
        <Svg w={16} h={16} stroke="#c6d2f5">
          <circle cx="8" cy="8" r="7" fill="#1b2fa8" />
          <path d="M5.500 6c0-3.500 5-3 5 0 0 1.500-2.500 1.500-2.500 3.500M8 11v2" stroke="#fff" strokeWidth="1.800" />
        </Svg>
      )
    case 'window':
      return (
        <Svg w={9} h={19} stroke="#fff">
          <path d="M2.500 2V.5h6v4H7M.5 2.500h5v4h-5z" />
          <path d="M2 15h5l-2.500 3z" fill="#fff" stroke="none" />
        </Svg>
      )
    case 'note':
      return <NoteApp size={16} />
    case 'flower':
      return (
        <Svg w={15} h={15} stroke="none" fill="#f0b3b8">
          <circle cx="7.500" cy="3.500" r="3.200" />
          <circle cx="11.500" cy="6.500" r="3.200" />
          <circle cx="10" cy="11" r="3.200" />
          <circle cx="5" cy="11" r="3.200" />
          <circle cx="3.500" cy="6.500" r="3.200" />
          <circle cx="7.500" cy="7.500" r="2" fill="#d0626c" />
        </Svg>
      )
    case 'penguin':
      return (
        <Svg w={16} h={17} stroke="none">
          <ellipse cx="8" cy="6" rx="5" ry="6" fill="#111" />
          <ellipse cx="8" cy="11" rx="7" ry="5" fill="#111" />
          <ellipse cx="8" cy="12" rx="4" ry="4" fill="#fff" />
          <path d="M6 4h1.500v2H6zM9 4h1.500v2H9z" fill="#fff" />
          <path d="M5 7h6l-3 1.500zM3 15h4v2H3zM9 15h4v2H9z" fill="#f2a531" />
          <path d="M2 9c4 2 8 2 12 0v2c-4 2-8 2-12 0z" fill="#d22" />
        </Svg>
      )
    case 'speaker':
      return (
        <Svg w={15} h={15} stroke="none">
          <path d="M0 5h3l6-5v15l-6-5H0z" fill="#d9663c" />
          <path d="M5 4l4-4v15L5 11z" fill="#f0a98a" />
          <path d="M11 5v5M14 3v9" stroke="#8d3424" />
        </Svg>
      )
    case 'volume':
      return (
        <Svg w={15} h={13} stroke="#fff">
          <path d="M0 4h3l4-4v13L3 9H0z" fill="#fff" stroke="none" />
          <path d="M9 4q1.500 2.500 0 5M11 2.500q3 4 0 8M13 1q3.500 5.500 0 11" />
        </Svg>
      )
    case 'face':
      return (
        <Svg w={15} h={15} stroke="none">
          <circle cx="7.500" cy="7.500" r="7" fill="#d9dfc9" />
          <rect x="2" y="4" width="11" height="7" rx="3.500" fill="#fff" stroke="#8c8a5e" />
          <path d="M4.500 6.500h2v2h-2zM8.500 6.500h2v2h-2z" fill="#444" />
        </Svg>
      )
    case 'network':
      return (
        <Svg w={15} h={15} stroke="#fff">
          <path d="M4.500 3.500h10v8h-10zM7 14.500h6M9.500 12v2M1.500 0v3M3.500 0v3M.5 3.500h4v2h-4zM2.500 6v7H6" />
        </Svg>
      )
    default:
      return (
        <Svg w={15} h={15} stroke="#fff">
          <path d="M1.500 0v15" />
          <path d="M3 1h5l1 1h4v6H8L7 7H3z" fill="#fff" stroke="none" />
          <circle cx="10.500" cy="10.500" r="4" fill="#d22d2d" stroke="none" />
          <path d="M8.500 8.500l4 4M12.500 8.500l-4 4" />
        </Svg>
      )
  }
}

const TRAY = [
  ['keyboard', 22],
  ['help', 22],
  ['window', 22],
  ['note', 23],
  ['flower', 24],
  ['penguin', 24],
  ['speaker', 24],
  ['volume', 24],
  ['face', 24],
  ['network', 24],
  ['flag', 24],
]

const TaskbarArea = () => (
  <Taskbar>
    <Backdrop viewBox="0 0 1440 38" preserveAspectRatio="none" aria-hidden="true">
      <defs>
        <filter id="soft" x="-10%" y="-60%" width="120%" height="220%">
          <feGaussianBlur stdDeviation="6 3" />
        </filter>
      </defs>
      <g filter="url(#soft)" fill="#1d2730">
        <path d="M560 0l40 12 8 4-30-3z" opacity=".7" />
        <path d="M690 0l70 8 80 4 70 12 30 18h-70l-60-16-60-10z" opacity=".95" />
        <path d="M750 0h150l20 24-60-8z" opacity=".4" />
        <path d="M1100 38l20-20 60 2 20 18z" opacity=".4" />
      </g>
    </Backdrop>
    <TaskItems>
      <PlainButton aria-label="开始菜单"><StartOrb /></PlainButton>
      <Grip $gap={12} />
      <BareTaskButton aria-label="便签"><NoteApp /></BareTaskButton>
      <TaskButton aria-label="搜狗"><Sogou /></TaskButton>
      <TaskButton $on $w={52} $gap={10} aria-label="Word"><WordBig /></TaskButton>
      <TaskButton aria-label="资源管理器"><Explorer /></TaskButton>
      <TaskButton aria-label="计算机"><Computer /></TaskButton>
    </TaskItems>
    <Tray>
      <Grip $gap={6} />
      {TRAY.map(([kind, w]) => (
        <Tool key={kind} $w={w} aria-label={kind}>
          <TrayIcon kind={kind} />
        </Tool>
      ))}
      <Clock>
        21:01
        <br />
        2022/5/22
      </Clock>
      <ShowDesktop aria-label="显示桌面" />
    </Tray>
  </Taskbar>
)

const App = () => (
  <Window>
    <GlobalStyle />
    <Header />
    <Ribbon>
      <Clipboard />
      <FontGroup />
      <ParagraphGroup />
      <StylesGroup />
      <EditGroup />
      <RibbonEnd>
        <PlainButton aria-label="折叠功能区">
          <Svg w={9} h={6}><path d="M1 5l3.500-3.500L8 5" strokeWidth="2" /></Svg>
        </PlainButton>
      </RibbonEnd>
    </Ribbon>
    <Workspace>
      <Canvas>
        <Document />
      </Canvas>
      <VScroll>
        <PlainButton aria-label="向上滚动">
          <Svg w={7} h={4} stroke="none"><path d="M0 4h7L3.500 0z" fill="#666" /></Svg>
        </PlainButton>
        <Track />
        <PlainButton aria-label="向下滚动">
          <Svg w={7} h={4} stroke="none"><path d="M0 0h7L3.500 4z" fill="#666" /></Svg>
        </PlainButton>
      </VScroll>
    </Workspace>
    <Footer />
    <TaskbarArea />
  </Window>
)

export default App
